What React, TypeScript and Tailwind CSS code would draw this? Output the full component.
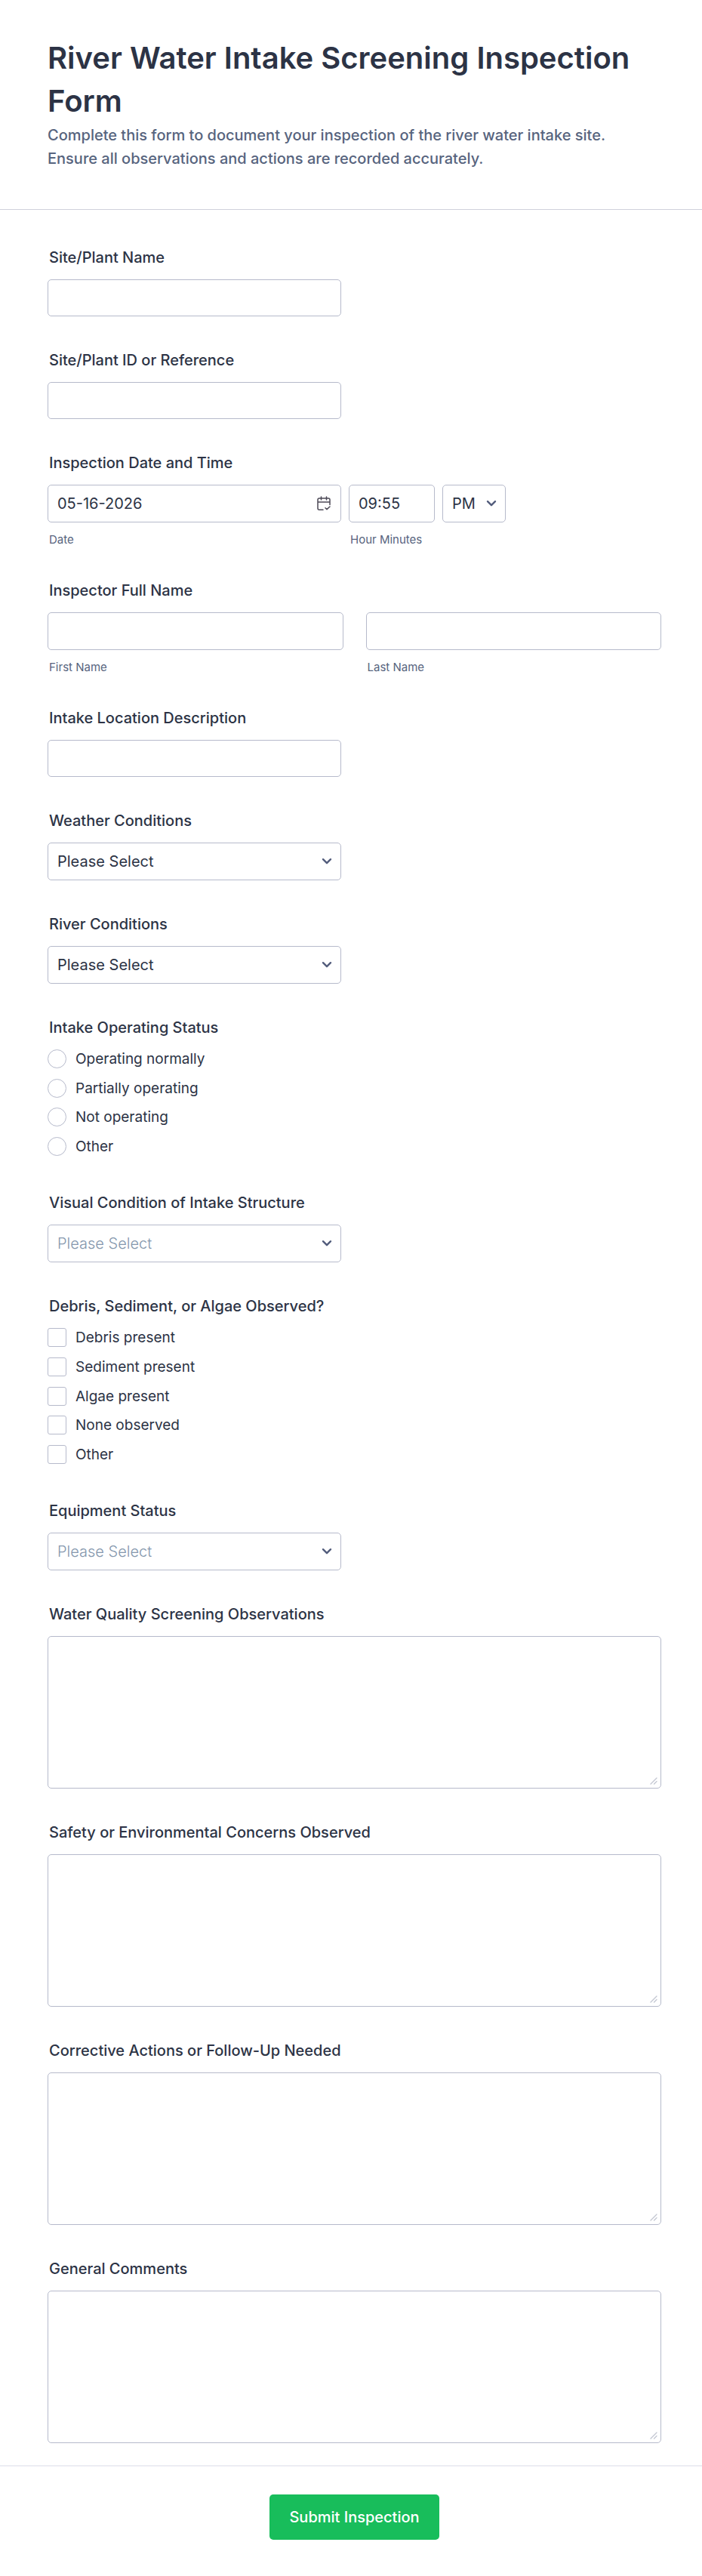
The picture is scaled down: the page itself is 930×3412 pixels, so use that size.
import { useId, type ReactNode } from "react";

const control =
  "block w-full rounded-[5px] border border-[#b6bacb] bg-white px-3 text-[20px] text-[#2c3345] outline-none";

function Label({ htmlFor, children }: { htmlFor: string; children: ReactNode }) {
  return (
    <label htmlFor={htmlFor} className="mb-[17px] block pl-0.5 text-[20px] leading-6 font-medium">
      {children}
    </label>
  );
}

function SubLabel({ htmlFor, children }: { htmlFor: string; children: ReactNode }) {
  return (
    <label htmlFor={htmlFor} className="mt-[14px] block pl-0.5 text-[15px] leading-[18px] text-[#57647e]">
      {children}
    </label>
  );
}

function TextField({ label }: { label: string }) {
  const id = useId();
  return (
    <div>
      <Label htmlFor={id}>{label}</Label>
      <div className="max-w-[389px]">
        <input id={id} type="text" className={`${control} h-[49px]`} />
      </div>
    </div>
  );
}

function Chevron() {
  return (
    <svg
      viewBox="0 0 14 9"
      className="pointer-events-none absolute top-1/2 right-3 h-[9px] w-[14px] -translate-y-1/2"
      fill="none"
      stroke="#535d7c"
      strokeWidth="2.4"
      strokeLinecap="round"
      strokeLinejoin="round"
      aria-hidden="true"
    >
      <path d="M2 1.7 L7 6.7 L12 1.7" />
    </svg>
  );
}

function SelectField({ label, options, muted = false }: { label: string; options: string[]; muted?: boolean }) {
  const id = useId();
  return (
    <div>
      <Label htmlFor={id}>{label}</Label>
      <div className="relative max-w-[389px]">
        <select
          id={id}
          className={`${control} h-[50px] appearance-none pr-10 ${muted ? "font-light text-[#8597ad]" : ""}`}
        >
          <option>Please Select</option>
          {options.map((o) => (
            <option key={o}>{o}</option>
          ))}
        </select>
        <Chevron />
      </div>
    </div>
  );
}

function ChoiceField({ label, type, options }: { label: string; type: "radio" | "checkbox"; options: string[] }) {
  const name = useId();
  const shape = type === "radio" ? "rounded-full checked:border-[7px]" : "rounded-[3px] checked:bg-[#2e69ff]";
  const height = type === "radio" ? "min-h-[141px]" : "min-h-[180px]";
  return (
    <fieldset className="pb-1">
      <legend className="mb-[17px] block pl-0.5 text-[20px] leading-6 font-medium">{label}</legend>
      <div className={`flex flex-col justify-between ${height}`}>
        {options.map((o) => (
          <label key={o} className="flex items-center gap-3 text-[19px] leading-[25px]">
            <input
              type={type}
              name={name}
              className={`size-[25px] shrink-0 appearance-none border border-[#b6bacb] bg-white ${shape}`}
            />
            {o}
          </label>
        ))}
      </div>
    </fieldset>
  );
}

function TextAreaField({ label }: { label: string }) {
  const id = useId();
  return (
    <div>
      <Label htmlFor={id}>{label}</Label>
      <div className="relative">
        <textarea id={id} className={`${control} h-[202px] resize-none py-2`} />
        <svg
          viewBox="0 0 10 10"
          className="pointer-events-none absolute right-[5px] bottom-[5px] size-[10px]"
          stroke="#c3c7d2"
          strokeWidth="1.3"
          strokeLinecap="round"
          aria-hidden="true"
        >
          <path d="M1 9 L9 1 M5.5 9 L9 5.5" />
        </svg>
      </div>
    </div>
  );
}

function CalendarIcon() {
  return (
    <svg
      viewBox="0 0 18 20"
      className="pointer-events-none absolute top-1/2 right-[14px] h-5 w-[18px] -translate-y-1/2"
      fill="none"
      stroke="#4d4a57"
      strokeWidth="1.5"
      strokeLinecap="round"
      strokeLinejoin="round"
      aria-hidden="true"
    >
      <path d="M8 18.2 H3 Q1 18.2 1 16.2 V5 Q1 3 3 3 H15 Q17 3 17 5 V11.5 M1 8 H17 M5.5 1 V5 M12.5 1 V5 M11 15.8 L13 17.6 L17 14" />
    </svg>
  );
}

function DateTimeField() {
  return (
    <div>
      <Label htmlFor="date">Inspection Date and Time</Label>
      <div className="flex gap-[10px]">
        <div className="w-[389px]">
          <div className="relative">
            <input id="date" type="text" defaultValue="05-16-2026" className={`${control} h-[50px]`} />
            <CalendarIcon />
          </div>
          <SubLabel htmlFor="date">Date</SubLabel>
        </div>
        <div className="w-[114px]">
          <input id="time" type="text" defaultValue="09:55" className={`${control} h-[50px]`} />
          <SubLabel htmlFor="time">Hour Minutes</SubLabel>
        </div>
        <div className="relative h-[50px] w-[84px]">
          <select aria-label="AM or PM" defaultValue="PM" className={`${control} h-[50px] appearance-none`}>
            <option>AM</option>
            <option>PM</option>
          </select>
          <Chevron />
        </div>
      </div>
    </div>
  );
}

function NameField() {
  return (
    <div>
      <Label htmlFor="first-name">Inspector Full Name</Label>
      <div className="grid grid-cols-2 gap-[30px]">
        <div>
          <input id="first-name" type="text" className={`${control} h-[50px]`} />
          <SubLabel htmlFor="first-name">First Name</SubLabel>
        </div>
        <div>
          <input id="last-name" type="text" className={`${control} h-[50px]`} />
          <SubLabel htmlFor="last-name">Last Name</SubLabel>
        </div>
      </div>
    </div>
  );
}

export default function App() {
  return (
    <form className="min-h-screen bg-white font-['Inter',sans-serif] text-[#2c3345]" onSubmit={(e) => e.preventDefault()}>
      <header className="border-b border-[#cfd1dc] pt-12 pr-[54px] pb-[51px] pl-[63px]">
        <h1 className="text-[40px] leading-[57px] font-semibold">River Water Intake Screening Inspection Form</h1>
        <p className="mt-0.5 max-w-[780px] text-[20px] leading-[31px] font-medium text-[#57647e]">
          Complete this form to document your inspection of the river water intake site. Ensure all observations and
          actions are recorded accurately.
        </p>
      </header>

      <main className="flex flex-col gap-[46px] pt-[51px] pr-[54px] pb-[29px] pl-[63px]">
        <TextField label="Site/Plant Name" />
        <TextField label="Site/Plant ID or Reference" />
        <DateTimeField />
        <NameField />
        <TextField label="Intake Location Description" />
        <SelectField label="Weather Conditions" options={["Clear", "Cloudy", "Rain", "Snow", "Windy"]} />
        <SelectField label="River Conditions" options={["Low", "Normal", "High", "Flood"]} />
        <ChoiceField
          label="Intake Operating Status"
          type="radio"
          options={["Operating normally", "Partially operating", "Not operating", "Other"]}
        />
        <SelectField label="Visual Condition of Intake Structure" options={["Good", "Fair", "Poor"]} muted />
        <ChoiceField
          label="Debris, Sediment, or Algae Observed?"
          type="checkbox"
          options={["Debris present", "Sediment present", "Algae present", "None observed", "Other"]}
        />
        <SelectField label="Equipment Status" options={["Functional", "Needs repair", "Out of service"]} muted />
        <TextAreaField label="Water Quality Screening Observations" />
        <TextAreaField label="Safety or Environmental Concerns Observed" />
        <TextAreaField label="Corrective Actions or Follow-Up Needed" />
        <TextAreaField label="General Comments" />
      </main>

      <footer className="flex justify-center border-t-2 border-[#ecedf3] pt-[37px] pr-[54px] pb-12 pl-[63px]">
        <button type="submit" className="h-[60px] rounded-[5px] bg-[#18bd5b] px-[26px] text-[20px] font-medium text-white">
          Submit Inspection
        </button>
      </footer>
    </form>
  );
}
